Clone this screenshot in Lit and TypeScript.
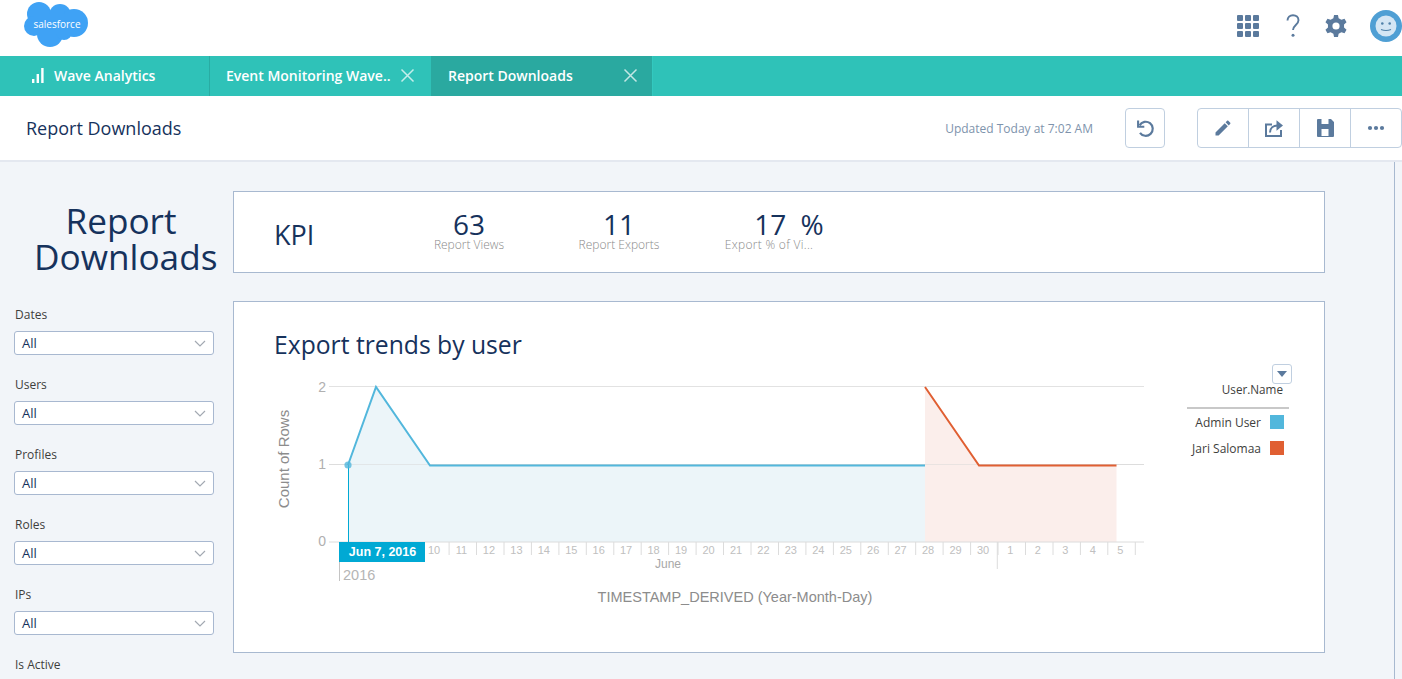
import { LitElement, html, css, svg } from "lit";
import { customElement } from "lit/decorators.js";

const gearPath = (() => {
  const cx = 12, cy = 12, teeth = 6;
  const pts: string[] = [];
  for (let i = 0; i < teeth; i++) {
    const a = (i * Math.PI * 2) / teeth - Math.PI / 2;
    const step = Math.PI / teeth;
    const p = (r: number, t: number) => `${(cx + r * Math.cos(t)).toFixed(2)} ${(cy + r * Math.sin(t)).toFixed(2)}`;
    pts.push(p(8.2, a - step * 0.62), p(11.2, a - step * 0.34), p(11.2, a + step * 0.34), p(8.2, a + step * 0.62));
  }
  return `M${pts.join("L")}Z M12 8.4a3.6 3.6 0 1 0 0 7.2a3.6 3.6 0 1 0 0-7.2Z`;
})();

const ticks = Array.from({ length: 27 }, (_, i) => 421.6 + i * 27.45);
const labels = ["10","11","12","13","14","15","16","17","18","19","20","21","22","23","24","25","26","27","28","29","30","1","2","3","4","5"];

@customElement("app-root")
export class AppRoot extends LitElement {
  static styles = css`
    :host { display: block; width: 1402px; height: 679px; overflow: hidden; background: #f2f5f9; font-family: "Open Sans", sans-serif; color: #16325c; }
    svg { display: block; }
    .top { height: 56px; background: #fff; display: flex; align-items: flex-start; }
    .logo { margin: 2px 0 0 24px; }
    .top-icons { margin-left: auto; display: flex; align-items: center; height: 52px; }
    .i-grid { display: grid; grid-template-columns: repeat(3, 6px); grid-auto-rows: 6px; gap: 2px; }
    .i-grid span { background: #5b7a9d; border-radius: 1px; }
    .i-help { margin-left: 27px; }
    .i-gear { margin-left: 24px; }
    .avatar { margin-left: 22px; }
    .tabs { height: 40px; box-sizing: border-box; background: #2fc2b8; display: flex; color: #fff; font-size: 14px; font-weight: 600; }
    .tab { display: flex; align-items: center; box-sizing: border-box; white-space: nowrap; padding-bottom: 1px; }
    .tab.home { width: 210px; padding-left: 32px; gap: 10px; border-right: 1px solid #29aca3; }
    .tab.ev { width: 221px; padding-left: 16px; padding-right: 16px; justify-content: space-between; }
    .tab.cur { width: 222px; padding-left: 17px; padding-right: 14px; justify-content: space-between; background: #2aa9a0; border-right: 1px solid #33c9bf; }
    .sub { height: 66px; box-sizing: border-box; background: #fff; border-bottom: 2px solid #e4e8f0; display: flex; align-items: center; padding-left: 26px; }
    .sub h1 { margin: 0; font-size: 18px; font-weight: 400; color: #16325c; }
    .updated { margin-left: auto; font-size: 12px; color: #7e93ac; }
    .btn { height: 40px; box-sizing: border-box; border: 1px solid #c0cfe0; border-radius: 4px; display: flex; background: #fff; }
    .btn.undo { width: 40px; margin-left: 32px; align-items: center; justify-content: center; }
    .btn.group { width: 205px; margin-left: 32px; }
    .btn.group > div { flex: 1; display: flex; align-items: center; justify-content: center; border-left: 1px solid #c0cfe0; }
    .btn.group > div:first-child { border-left: 0; }
    .body { width: 1395px; height: 517px; box-sizing: border-box; border-right: 1px solid #a8b9d0; display: grid; grid-template-columns: 233px 1092px; align-content: start; }
    .side { padding: 40px 19px 0 14px; }
    .side h2 { margin: 0 0 33px; font-size: 35.2px; line-height: 36px; font-weight: 400; text-align: center; color: #16325c; padding-left: 20px; }
    .side h2 span { display: block; }
    .side h2 .l1 { padding-right: 6px; }
    .filter { height: 70px; }
    .filter label { display: block; font-size: 12px; line-height: 16px; color: #3e3e3c; margin: 0 0 8px 1px; }
    .select { height: 24px; width: 200px; box-sizing: border-box; background: #fff; border: 1px solid #a8b8d0; border-radius: 3px; display: flex; align-items: center; justify-content: space-between; padding: 0 7px; font-size: 13px; color: #16325c; }
    .main { padding-top: 29px; display: flex; flex-direction: column; gap: 28px; }
    .card { background: #fff; border: 1px solid #a8b9d0; box-sizing: border-box; }
    .kpi { height: 82px; display: flex; align-items: center; padding-left: 40px; }
    .kpi-title { width: 120px; font-size: 27px; line-height: 32px; margin-top: 6px; }
    .metric { width: 150px; text-align: center; display: flex; flex-direction: column; margin-top: -5px; }
    .metric b { font-weight: 400; font-size: 28px; line-height: 30px; color: #16325c; }
    .metric span { font-size: 12px; line-height: 12px; font-weight: 300; color: #8a8a8a; white-space: nowrap; }
    .metric.pct b { padding-left: 40px; word-spacing: 7px; }
    .metric.pct span { letter-spacing: .3px; }
    .chart { height: 352px; }
    .chart h3 { margin: 0; padding: 27px 0 0 40px; font-size: 24.7px; line-height: 32px; font-weight: 400; color: #16325c; }
    .chart-row { display: flex; margin: 3px 0 0 36px; }
    .legend { margin-left: 37px; width: 105px; font-size: 12px; color: #3e3e3c; }
    .dd { width: 20px; height: 20px; box-sizing: border-box; margin-left: auto; border: 1px solid #c0cfe0; border-radius: 3px; display: flex; align-items: center; justify-content: center; }
    .lg-head { text-align: right; padding-right: 6px; line-height: 16px; font-size: 11.7px; margin-top: -3px; padding-bottom: 10px; border-bottom: 2px solid #c8c8c8; width: 96px; }
    .lg-rows { margin-top: 6px; }
    .lg-row { display: flex; align-items: center; justify-content: flex-end; gap: 9px; height: 14px; width: 97px; margin-bottom: 12px; white-space: nowrap; }
    .sw { width: 14px; height: 14px; flex: none; }
    .sw.a { background: #52b7dc; }
    .sw.j { background: #e05f32; }
    .axis text { font-family: "Liberation Sans", sans-serif; }
  `;

  private close() {
    return html`<svg width="15" height="15" viewBox="0 0 15 15"><path d="M1.5 1.5l12 12M13.5 1.5l-12 12" stroke="#fff" stroke-opacity=".72" stroke-width="1.5" fill="none"/></svg>`;
  }

  private filter(name: string) {
    return html`<div class="filter">
      <label>${name}</label>
      <div class="select"><span>All</span>
        <svg width="12" height="7" viewBox="0 0 12 7"><path d="M1 1l5 5 5-5" stroke="#a3a9b2" stroke-width="1.2" fill="none"/></svg>
      </div>
    </div>`;
  }

  private chart() {
    return html`<svg class="axis" width="880" height="250" viewBox="270 364 880 250">
      ${svg`
      <path d="M329 386.5H1144M329 464.5H1144" stroke="#e2e2e2" stroke-width="1"/>
      <path d="M348 542V465L376 387L430 465.5H925V542Z" fill="#ecf5f9"/>
      <path d="M925 542V387L979 465.5H1116.5V542Z" fill="#fbeeeb"/>
      <path d="M329 464.5H1144" stroke="#d8d8d8" stroke-opacity=".5"/>
      <path d="M329 542H1144" stroke="#dcdcdc"/>
      ${ticks.map((x) => svg`<path d="M${x.toFixed(1)} 542V555" stroke="#dcdcdc"/>`)}
      <path d="M997.3 542V569" stroke="#dcdcdc"/>
      <path d="M348 465L376 387L430 465.5H925" fill="none" stroke="#52b7dc" stroke-width="2"/>
      <path d="M925 387L979 465.5H1116.5" fill="none" stroke="#e05f32" stroke-width="2"/>
      <path d="M348.5 465V542" stroke="#00a9d4" stroke-width="1"/>
      <circle cx="348" cy="465" r="3.6" fill="#52b7dc" fill-opacity=".8"/>
      <rect x="339" y="542" width="86" height="20" fill="#00a9d4"/>
      <text x="382.5" y="556" text-anchor="middle" font-size="12.5" font-weight="700" fill="#fff">Jun 7, 2016</text>
      <path d="M339.5 562V581" stroke="#c4c4c4"/>
      <text x="343" y="580" font-size="14.5" fill="#b5b5b5">2016</text>
      <text x="326" y="392" text-anchor="end" font-size="14" fill="#b0b0b0">2</text>
      <text x="326" y="469" text-anchor="end" font-size="14" fill="#b0b0b0">1</text>
      <text x="326" y="546" text-anchor="end" font-size="14" fill="#b0b0b0">0</text>
      ${labels.map((l, i) => svg`<text x="${(434 + i * 27.45).toFixed(1)}" y="554" text-anchor="middle" font-size="11" fill="#c0c0c0">${l}</text>`)}
      <text x="668" y="568" text-anchor="middle" font-size="12" fill="#a8a8a8">June</text>
      <text x="735" y="602" text-anchor="middle" font-size="14.5" fill="#8c8c8c">TIMESTAMP_DERIVED (Year-Month-Day)</text>
      <text transform="translate(289 459) rotate(-90)" text-anchor="middle" font-size="15" fill="#8c8c8c">Count of Rows</text>
      `}
    </svg>`;
  }

  render() {
    return html`
      <div class="top">
        <svg class="logo" width="65" height="46" viewBox="0 0 65 46">
          <g fill="#3fa2f5">
            <circle cx="15" cy="12" r="12"/><circle cx="36" cy="13" r="11"/><circle cx="50" cy="21" r="14"/>
            <circle cx="10" cy="24" r="10"/><circle cx="26" cy="32" r="13"/><circle cx="40" cy="30" r="8"/>
            <rect x="10" y="12" width="40" height="20"/>
          </g>
          <text x="33" y="25.5" text-anchor="middle" font-family="'Open Sans', sans-serif" font-size="11.5" fill="#fff" textLength="47" lengthAdjust="spacingAndGlyphs">salesforce</text>
        </svg>
        <div class="top-icons">
          <div class="i-grid">${Array.from({ length: 9 }, () => html`<span></span>`)}</div>
          <svg class="i-help" width="14" height="24" viewBox="0 0 14 24"><path d="M1.5 6.5C1.5 3.2 3.8 1.2 7 1.2s5.5 2 5.5 5c0 4.6-5.5 5-5.5 9.8" fill="none" stroke="#5b7a9d" stroke-width="1.9"/><circle cx="7" cy="21.3" r="1.5" fill="#5b7a9d"/></svg>
          <svg class="i-gear" width="24" height="24" viewBox="0 0 24 24"><path fill="#5b7a9d" fill-rule="evenodd" d="${gearPath}"/></svg>
          <svg class="avatar" width="32" height="32" viewBox="0 0 32 32"><circle cx="16" cy="16" r="16" fill="#4f9fd4"/><circle cx="16" cy="16" r="10.5" fill="#d4e6f4"/><circle cx="12.3" cy="13.5" r="1.3" fill="#4f80a8"/><circle cx="19.7" cy="13.5" r="1.3" fill="#4f80a8"/><path d="M11 19.5c3 1.2 7 1.2 10 0" stroke="#4f80a8" stroke-width="1.2" fill="none"/></svg>
        </div>
      </div>
      <div class="tabs">
        <div class="tab home">
          <svg width="12" height="15" viewBox="0 0 12 15"><path fill="#fff" d="M0 11h2.4v4H0zM4.6 6h2.4v9H4.6zM9.2 0h2.4v15H9.2z"/></svg>
          <span>Wave Analytics</span>
        </div>
        <div class="tab ev"><span>Event Monitoring Wave..</span>${this.close()}</div>
        <div class="tab cur"><span>Report Downloads</span>${this.close()}</div>
      </div>
      <div class="sub">
        <h1>Report Downloads</h1>
        <span class="updated">Updated Today at 7:02 AM</span>
        <div class="btn undo">
          <svg width="20" height="20" viewBox="0 0 20 20"><path d="M4.6 7.4A7 7 0 1 1 5 14.8" fill="none" stroke="#5b7a9d" stroke-width="2.2"/><path d="M3.1 2.6v6.2h6.2" fill="none" stroke="#5b7a9d" stroke-width="2.1"/></svg>
        </div>
        <div class="btn group">
          <div><svg width="20" height="20" viewBox="0 0 24 24"><path fill="#5b7a9d" d="M3 17.25V21h3.75L17.81 9.94l-3.75-3.75L3 17.25zM20.71 7.04c.39-.39.39-1.02 0-1.41l-2.34-2.34c-.39-.39-1.02-.39-1.41 0l-1.83 1.83 3.75 3.75 1.83-1.83z"/></svg></div>
          <div><svg width="20" height="20" viewBox="0 0 20 20"><path d="M8 6.5H2v11.5h15v-6" fill="none" stroke="#5b7a9d" stroke-width="2"/><path d="M6 14.5C6 10 9.5 7.5 13.5 7.5" fill="none" stroke="#5b7a9d" stroke-width="2"/><path d="M12.5 2.2L19 7.5l-6.5 5.3z" fill="#5b7a9d"/></svg></div>
          <div><svg width="20" height="20" viewBox="0 0 20 20"><path fill="#5b7a9d" fill-rule="evenodd" d="M2 2a1 1 0 0 1 1-1h3.5v5h7V1H16l3 3v14a1 1 0 0 1-1 1H3a1 1 0 0 1-1-1zM6.5 11v7h7v-7z"/></svg></div>
          <div><svg width="18" height="6" viewBox="0 0 18 6"><circle cx="3" cy="3" r="2.1" fill="#5b7a9d"/><circle cx="9" cy="3" r="2.1" fill="#5b7a9d"/><circle cx="15" cy="3" r="2.1" fill="#5b7a9d"/></svg></div>
        </div>
      </div>
      <div class="body">
        <aside class="side">
          <h2><span class="l1">Report</span><span>Downloads</span></h2>
          ${["Dates", "Users", "Profiles", "Roles", "IPs"].map((n) => this.filter(n))}
          <div class="filter"><label>Is Active</label></div>
        </aside>
        <div class="main">
          <section class="card kpi">
            <div class="kpi-title">KPI</div>
            <div class="metric"><b>63</b><span>Report Views</span></div>
            <div class="metric"><b>11</b><span>Report Exports</span></div>
            <div class="metric pct"><b>17 %</b><span>Export % of Vi...</span></div>
          </section>
          <section class="card chart">
            <h3>Export trends by user</h3>
            <div class="chart-row">
              ${this.chart()}
              <div class="legend">
                <div class="dd"><svg width="10" height="6" viewBox="0 0 10 6"><path d="M0 0h10L5 6z" fill="#5b7a9d"/></svg></div>
                <div class="lg-head">User.Name</div>
                <div class="lg-rows">
                  <div class="lg-row"><span>Admin User</span><span class="sw a"></span></div>
                  <div class="lg-row"><span>Jari Salomaa</span><span class="sw j"></span></div>
                </div>
              </div>
            </div>
          </section>
        </div>
      </div>
    `;
  }
}
